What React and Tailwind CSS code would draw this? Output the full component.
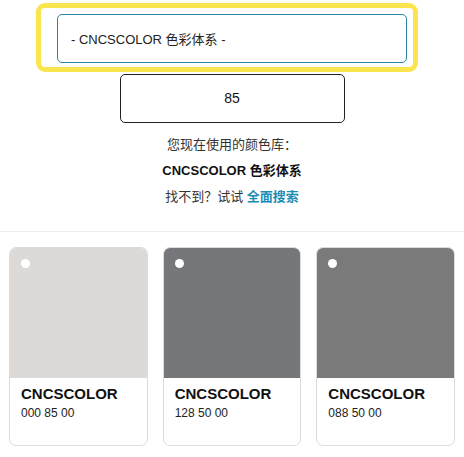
import React from 'react';

const swatches = [
  { name: 'CNCSCOLOR', code: '000 85 00', color: '#dcd9d6' },
  { name: 'CNCSCOLOR', code: '128 50 00', color: '#76777a' },
  { name: 'CNCSCOLOR', code: '088 50 00', color: '#797a79' },
];

const SwatchCard = ({ item }) => (
  <div className="border border-[#dcdcdc] rounded-[7px] overflow-hidden bg-white h-[199px] flex flex-col">
    <div className="h-[130px] relative" style={{ backgroundColor: item.color }}>
      <span className="absolute left-[11px] top-[11px] w-[9px] h-[9px] rounded-full bg-white"></span>
    </div>
    <div className="pt-[7px] px-[11px]">
      <p className="text-[15px] leading-[18px] font-bold text-[#111]">{item.name}</p>
      <p className="text-[12px] leading-[16px] mt-[2px] text-[#222]">{item.code}</p>
    </div>
  </div>
);

export default function App() {
  return (
    <div className="w-[464px] h-[457px] bg-white overflow-hidden" style={{ fontFamily: '"Liberation Sans", Arial, "Noto Sans CJK SC", sans-serif' }}>
      {/* library picker, highlighted */}
      <div className="ml-[36px] mt-[3px] w-[382px] h-[69px] border-[5px] border-[#fbe54e] rounded-[9px] pl-[16px] pr-[5px] pt-[6px]">
        <div className="w-[350px] h-[49px] border border-[#2a86a6] rounded-[5px] flex items-center pl-[13px] pt-[3px] text-[13px] text-[#222]">
          - CNCSCOLOR 色彩体系 -
        </div>
      </div>

      <div className="flex justify-center mt-[2px]">
        <div className="w-[225px] h-[49px] border border-[#222] rounded-[5px] flex items-center justify-center text-[14px] text-[#111]">
          85
        </div>
      </div>

      <div className="mt-[9px] text-center text-[13px] leading-[26px] text-[#333]">
        <p>您现在使用的颜色库：</p>
        <p className="font-bold text-[#111]">CNCSCOLOR 色彩体系</p>
        <p>
          找不到？试试 <span className="font-bold text-[#1a8db5]">全面搜索</span>
        </p>
      </div>

      <div className="mt-[21px] border-t border-[#ececec]"></div>

      <div className="grid grid-cols-3 gap-x-[15px] px-[9px] pt-[15px]">
        {swatches.map((s, i) => (
          <SwatchCard key={i} item={s} />
        ))}
      </div>
    </div>
  );
}
